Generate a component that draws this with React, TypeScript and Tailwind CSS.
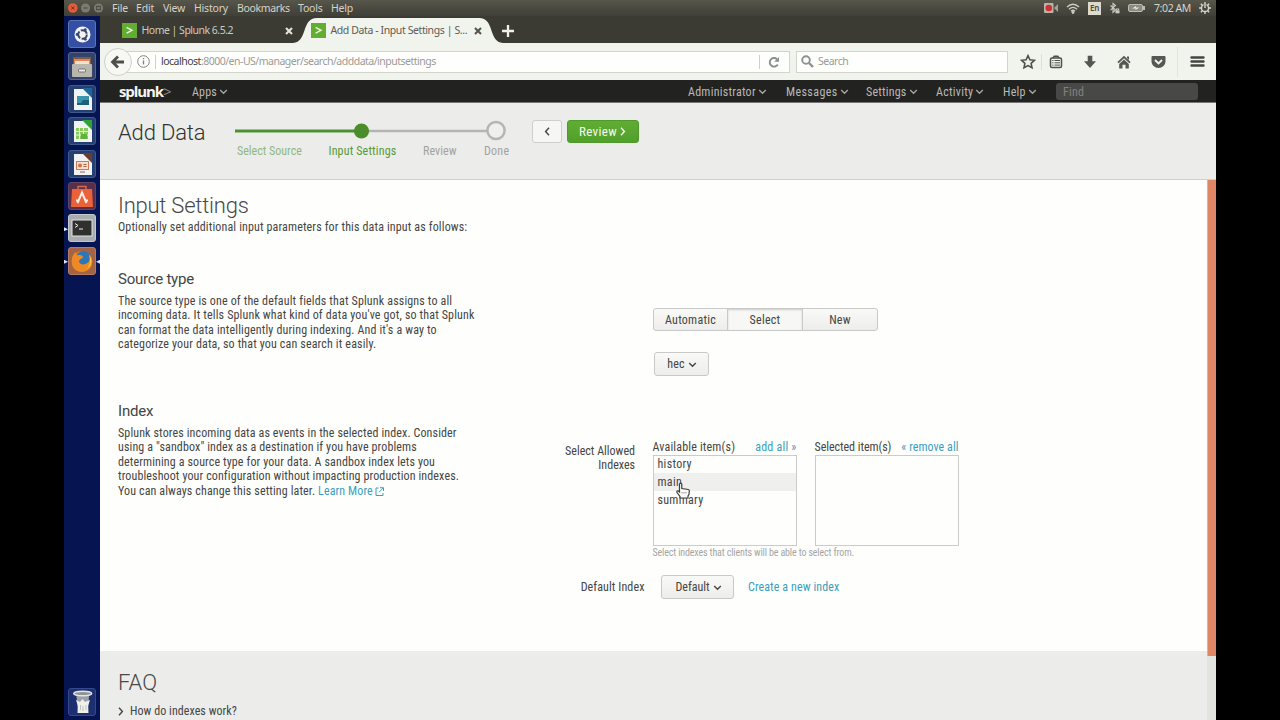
import React from "react";

const cx = (...parts: (string | undefined)[]) => parts.filter(Boolean).join(" ");

function Chevron({ className, dir = "down" }: { className?: string; dir?: "down" | "left" | "right" }) {
  const d = dir === "down" ? "M1.2 3 4.5 6.3 7.8 3" : dir === "left" ? "M6 .8 2.6 4.5 6 8.2" : "M3 .8 6.4 4.5 3 8.2";
  return (
    <svg viewBox="0 0 9 9" className={cx("h-[9px] w-[9px] shrink-0", className)} fill="none" stroke="currentColor" strokeWidth="1.4">
      <path d={d} />
    </svg>
  );
}

function Favicon() {
  return (
    <svg viewBox="0 0 15 15" className="h-[15px] w-[15px] shrink-0">
      <rect width="15" height="15" fill="#62ad32" />
      <path d="M4.6 4.4 10 7.3 4.6 10.2" fill="none" stroke="#e9f7df" strokeWidth="1.4" />
    </svg>
  );
}

function CloseX({ className }: { className?: string }) {
  return (
    <svg viewBox="0 0 8 8" className={cx("h-2 w-2 shrink-0", className)} stroke="currentColor" strokeWidth="2.1">
      <path d="M1 1 7 7M7 1 1 7" />
    </svg>
  );
}

function MenuBar() {
  return (
    <header className="flex h-4 shrink-0 items-center bg-linear-to-b from-[#56564a] to-[#403f39] pl-1 text-[10.5px] text-[#d6d3c8] font-['Noto_Sans',sans-serif]">
      <svg viewBox="0 0 40 12" className="h-3 w-10">
        <circle cx="4.8" cy="6" r="4.8" fill="#e35d3b" />
        <path d="m3.2 4.4 3.2 3.2m0-3.2L3.2 7.6" stroke="#7c2a17" strokeWidth="1" />
        <circle cx="17.5" cy="6" r="4.6" fill="#7d7b70" />
        <path d="M15.500 6h4" stroke="#46453e" />
        <circle cx="30.5" cy="6" r="4.6" fill="#7d7b70" />
        <rect x="28.7" y="4.3" width="3.6" height="3.4" fill="none" stroke="#46453e" />
      </svg>
      <nav className="flex pt-px pl-1 tracking-[-0.2px] whitespace-nowrap">
        <span className="w-6">File</span>
        <span className="w-[27px]">Edit</span>
        <span className="w-[31px]">View</span>
        <span className="w-[43px]">History</span>
        <span className="w-[61px] tracking-[-0.35px]">Bookmarks</span>
        <span className="w-[33px]">Tools</span>
        <span>Help</span>
      </nav>
      <div className="ml-auto flex h-4 items-center pr-[5px]">
        <svg viewBox="0 0 14 10" className="mr-2 h-2.5 w-3.5">
          <rect width="9.5" height="10" rx="1" fill="#b9b3aa" />
          <circle cx="4.8" cy="5" r="3.300" fill="#cf3030" />
          <path d="m10 5 4-4v8z" fill="#a5a199" />
        </svg>
        <svg viewBox="0 0 14 11" className="mr-2 h-[11px] w-3.5" fill="none" stroke="#cfccc1" strokeWidth="1.3">
          <path d="M1 4Q7-1.500 13 4M3 6.200Q7 2.500 11 6.200M5 8.200Q7 6.300 9 8.200" />
          <circle cx="7" cy="9.5" r=".8" fill="#cfccc1" />
        </svg>
        <span className="mr-2 flex h-[13px] w-[13px] items-center justify-center bg-[#dcd9cf] text-[8px] font-semibold tracking-[-0.3px] text-[#4a4940]">En</span>
        <svg viewBox="0 0 11 12" className="mr-2 h-3 w-[11px]" fill="none" stroke="#cfccc1" strokeWidth="1.1">
          <path d="m1.500 3.500 5 4.500-2.500 2.500v-9L6.500 3.500l-5 4.700" />
          <rect x="6.5" y="8.3" width="4" height="3" fill="#cfccc1" stroke="none" />
          <path d="M7.300 8.500V7h2.300v1.500" />
        </svg>
        <svg viewBox="0 0 17 8" className="mr-[9px] h-2 w-[17px]">
          <rect x=".5" y=".5" width="14" height="7" rx="1.5" fill="#8d8b80" stroke="#bdbab0" />
          <rect x="15" y="2" width="2" height="4" fill="#bdbab0" />
          <path d="M4 4.500 8 2v1.500h3.500L7.500 6V4.500z" fill="#e8e5db" />
        </svg>
        <span className="mr-2 w-[37px] pt-px tracking-[-0.4px] whitespace-nowrap">7:02 AM</span>
        <svg viewBox="0 0 12 12" className="h-3 w-3" fill="none" stroke="#d6d3c8">
          <circle cx="6" cy="6" r="3.6" strokeWidth="1.5" />
          <path d="M6 2v3.500" stroke="#4b4a41" strokeWidth="3" />
          <path d="M6 0v6M6 10v2M0 6h2M10 6h2M1.800 1.800l1.500 1.500M8.700 8.700l1.500 1.500M1.800 10.200l1.500-1.500M8.700 3.300l1.500-1.500" strokeWidth="1.4" />
        </svg>
      </div>
    </header>
  );
}

function Tile({ fill, stroke = "#5c73a8", children }: { fill: string; stroke?: string; children: React.ReactNode }) {
  return (
    <svg viewBox="0 0 28 28" className="h-7 w-7 shrink-0">
      <rect x=".5" y=".5" width="27" height="27" rx="2.5" fill={fill} stroke={stroke} />
      {children}
    </svg>
  );
}

function Doc({ corner, children }: { corner: string; children: React.ReactNode }) {
  return (
    <Tile fill="#253f72" stroke="#405a8c">
      <path d="M6 4h10l8 8v13H6z" fill="#f0f3f1" />
      <path d="M14 3h10v10z" fill={corner} />
      {children}
    </Tile>
  );
}

function Launcher() {
  return (
    <aside className="flex w-9 shrink-0 flex-col items-center bg-[#071452] pt-1">
      <div className="flex flex-col gap-[4.4px]">
        <Tile fill="#3450a4" stroke="#5b73b8">
          <circle cx="14.5" cy="14.5" r="8" fill="#f3f4f8" />
          <circle cx="14.5" cy="14.5" r="4.3" fill="none" stroke="#36486f" strokeWidth="2" strokeDasharray="7.5 1.5" />
          <circle cx="9.1" cy="14.5" r="1.4" fill="#36486f" />
          <circle cx="17.3" cy="9.7" r="1.4" fill="#36486f" />
          <circle cx="17.3" cy="19.3" r="1.4" fill="#36486f" />
        </Tile>
        <Tile fill="#34426c" stroke="#56658f">
          <path d="M5 5h18v8H5z" fill="#7b5a49" />
          <path d="M6 7h16v7H6z" fill="#e8834f" />
          <path d="M7 9h14v5H7z" fill="#f4e3d2" />
          <rect x="4" y="12" width="20" height="13" rx="1" fill="#b9b6ad" />
          <rect x="10.500" y="17" width="7" height="3" rx="1" fill="#efeee9" stroke="#75736c" />
        </Tile>
        <Doc corner="#1f6698">
          <rect x="9" y="11" width="12" height="9" fill="#3d94ad" />
          <path d="M9 20v-2h4l2-3h6v5z" fill="#1d6078" />
        </Doc>
        <Doc corner="#2fa436">
          <rect x="8" y="11" width="12" height="11" fill="#86cc5b" />
          <path d="M8 14.500h12M8 18h12M11.500 11v11M15.500 11v11" stroke="#e4f5d8" />
          <rect x="13" y="17" width="6" height="5" fill="#5fb33b" />
        </Doc>
        <Doc corner="#6a3d2c">
          <rect x="8.500" y="11.500" width="12" height="8" fill="#f7ddcb" stroke="#c57b57" />
          <circle cx="12" cy="15.500" r="2" fill="#d2704a" />
          <path d="M15.500 14.500H18.500M15.500 16.500H18.500M12 22h5" stroke="#a3614a" />
        </Doc>
        <Tile fill="#5a2f4c" stroke="#5f4568">
          <path d="M10 8V4.500h8V8" fill="none" stroke="#d66a46" strokeWidth="1.5" />
          <path d="M4 7h20l1 18H3z" fill="#e9623a" />
          <path d="M9.500 21 14 10.500 18.500 21M8 18.500h3M17 18.500h3" fill="none" stroke="#fff0e6" strokeWidth="2" />
        </Tile>
        <div className="relative flex">
          <Tile fill="#a9adb0" stroke="#c4c8cc">
            <rect x="4" y="6" width="20" height="16" fill="#30302f" stroke="#e2e2df" />
            <path d="m7 9.500 3 2-3 2M11 15h4" fill="none" stroke="#eee" />
          </Tile>
          <i className="absolute top-[13px] -left-1 h-1 w-1 bg-[#dfe5f3] [clip-path:polygon(0_0,100%_50%,0_100%)]" />
        </div>
        <div className="relative flex">
          <Tile fill="#a36344" stroke="#b57c60">
            <circle cx="14" cy="14.500" r="10.500" fill="#e57a23" />
            <circle cx="15.500" cy="11.500" r="7.500" fill="#2f76b9" />
            <path d="M4.500 9.500 7 5l2 3.500c3-1 6 0 6 1.500s-4 2-4 4.500 5 4.500 9 1c2-2 2-5 1-8 5 5 4 13-3 16.500-6 2.500-13-.5-14-7.500-.3-3 0-5 .5-7.500z" fill="#ee8a26" />
            <path d="M21 7.500c4 5 3 12-3 15 4-3 5-10 3-15z" fill="#f8c53d" />
          </Tile>
          <i className="absolute top-[13px] -left-1 h-1 w-1 bg-[#dfe5f3] [clip-path:polygon(0_0,100%_50%,0_100%)]" />
          <i className="absolute top-[13px] -right-1 h-1 w-1 bg-[#dfe5f3] [clip-path:polygon(100%_0,0_50%,100%_100%)]" />
        </div>
      </div>
      <div className="mt-auto mb-1 flex">
        <Tile fill="#1d2f70" stroke="#35488a">
          <path d="m8.500 8 1.500 17h10L21 8z" fill="#9aa2a8" />
          <path d="m8 12 4 2 2.500-3 2.500 3 5-2-2 6 .5 7h-11l.5-7z" fill="#eef0ec" />
          <ellipse cx="14.700" cy="5.500" rx="9" ry="2.300" fill="#8d9594" stroke="#e3e6e3" strokeWidth="1.400" />
          <path d="M12.500 17v5M15 18v5M18 17v5" stroke="#bcc2c0" />
        </Tile>
      </div>
    </aside>
  );
}

function Tabs() {
  return (
    <div className="flex h-[27px] shrink-0 items-center bg-[#3b3a33] pl-[21.5px] text-[10.5px] font-['Noto_Sans',sans-serif]">
      <div className="flex h-full w-[171.5px] items-center pt-0.5 text-[#cccac0]">
        <Favicon />
        <span className="ml-[5px] w-[144px] tracking-[-0.5px] whitespace-nowrap">Home | Splunk 6.5.2</span>
        <CloseX className="text-[#e6e4da]" />
      </div>
      <div className="relative flex h-full w-[210px] items-center pt-0.5 text-[#5d5c56]">
        <svg viewBox="0 0 210 27" className="absolute inset-0 h-[27px] w-[210px]">
          <path d="M0 27C15 26 8 2 24 2H186C202 2 195 26 210 27z" fill="#f1f3ed" />
        </svg>
        <div className="relative flex items-center pl-[17.500px]">
          <Favicon />
          <span className="ml-[5px] w-[143px] tracking-[-0.4px] whitespace-nowrap">Add Data - Input Settings | S...</span>
          <CloseX className="text-[#55544e]" />
        </div>
      </div>
      <svg viewBox="0 0 12 12" className="mt-[3px] -ml-[1px] h-3 w-3" stroke="#f1f0ea" strokeWidth="2.3">
        <path d="M6 0v12M0 6h12" />
      </svg>
    </div>
  );
}

function Toolbar() {
  return (
    <div className="flex h-[37px] shrink-0 items-center bg-[#f1f3ed] pl-1 text-[10.5px] text-[#9b9b98] font-['Noto_Sans',sans-serif]">
      <svg viewBox="0 0 28 28" className="relative z-10 -mr-[9px] h-7 w-7 shrink-0">
        <circle cx="14" cy="14" r="13.5" fill="#f7f8f4" stroke="#cfd0c9" />
        <path d="M20 14H9.500M14 8.500 8.500 14l5.500 5.500" fill="none" stroke="#4d4d49" strokeWidth="2.8" />
      </svg>
      <div className="flex h-[22px] w-[667px] items-center border border-[#d3d5cd] bg-[#fefefc] pl-[13px]">
        <svg viewBox="0 0 13 13" className="h-[13px] w-[13px]" fill="none" stroke="#83837e">
          <circle cx="6.5" cy="6.5" r="5.8" />
          <path d="M6.500 5.500v4M6.500 3v1.300" strokeWidth="1.4" />
        </svg>
        <i className="ml-[5px] h-3.5 w-px bg-[#cfd0ca]" />
        <span className="ml-[5px] tracking-[-0.5px] whitespace-nowrap"><span className="text-[#42423e]">localhost</span>:8000/en-US/manager/search/adddata/inputsettings</span>
        <i className="ml-auto h-3.5 w-px bg-[#cfd0ca]" />
        <svg viewBox="0 0 12 12" className="mr-[9px] ml-2 h-3 w-3" fill="none" stroke="#8b8f8e" strokeWidth="1.9">
          <path d="M9 3.200A4.300 4.300 0 1 0 9.800 8.500" />
          <path d="M11 1v4.800H6.200z" fill="#8b8f8e" stroke="none" />
        </svg>
      </div>
      <div className="ml-1.5 flex h-[22px] w-[212px] items-center border border-[#d3d5cd] bg-[#fefefc] pl-1 tracking-[-0.5px]">
        <svg viewBox="0 0 13 13" className="mr-1 h-[13px] w-[13px]" fill="none" stroke="#8d908d" strokeWidth="1.9">
          <circle cx="5" cy="5" r="3.8" />
          <path d="m8 8 4 4" strokeWidth="2.4" />
        </svg>
        Search
      </div>
      <svg viewBox="0 0 16 16" className="ml-3 h-4 w-4" fill="none" stroke="#4f4f4b" strokeWidth="1.6">
        <path d="m8 1.700 1.900 4.100 4.500.5-3.300 3 .9 4.500L8 11.600l-4 2.200.9-4.500-3.300-3 4.500-.5z" />
      </svg>
      <i className="ml-[5px] h-4 w-px bg-[#dddfd8]" />
      <svg viewBox="0 0 14 14" className="ml-[7px] h-3.5 w-3.5" fill="none" stroke="#4f4f4b" strokeWidth="1.5">
        <rect x="1.5" y="3" width="11" height="9.5" rx="1.5" />
        <path d="M4 3 5.200 1.300h3.600L10 3" />
        <path d="M3.200 5.500h1.300M5.500 5.500h5.500M3.200 7.800h1.300M5.500 7.800h5.500M3.200 10.100h1.300M5.500 10.100h5.500" strokeWidth="1" />
      </svg>
      <svg viewBox="0 0 14 14" className="ml-5 h-3.5 w-3.5" fill="#565652">
        <path d="M4.700.8h4.600v5.500H13L7 13 1 6.300h3.700z" />
      </svg>
      <svg viewBox="0 0 14 14" className="ml-5 h-3.5 w-3.5" fill="#565652">
        <path d="m7 .8 6.600 6.200-1.200 1.300L7 3.300 1.600 8.300.4 7zM7 4.500 11.800 8.900V13.500H8.500V9.800h-3v3.700H2.200V8.900zM10 1.500h2V5l-2-2z" />
      </svg>
      <svg viewBox="0 0 15 14" className="ml-5 h-3.5 w-[15px]">
        <path d="M1.500 1h12q1 0 1 1v4.500a7 6.500 0 0 1-14 0V2q0-1 1-1z" fill="#565652" />
        <path d="m4 5 3.500 3.400L11 5" fill="none" stroke="#f1f3ed" strokeWidth="1.9" />
      </svg>
      <i className="ml-[11px] h-[30px] w-px bg-[#e2e4de]" />
      <svg viewBox="0 0 15 12" className="ml-3 h-3 w-[15px]" stroke="#454541" strokeWidth="2.4" strokeLinecap="round">
        <path d="M1.500 1.500h12M1.500 5.500h12M1.500 9.500h12" />
      </svg>
    </div>
  );
}

function NavItem({ label, className }: { label: string; className?: string }) {
  return (
    <span className={cx("flex shrink-0 items-center gap-[2px] whitespace-nowrap", className)}>
      {label}
      <Chevron className="text-[#a5a5a2]" />
    </span>
  );
}

function SplunkBar() {
  return (
    <div className="flex h-[23px] shrink-0 items-center border-b border-[#777] bg-[#222221] pt-px pl-[19px] text-[#b9b9b6]">
      <span className="w-[73px] pb-px text-[15px] font-bold tracking-[-1.1px] text-[#f5f5f3] font-['Open_Sans',sans-serif] [font-stretch:100%]">splunk<span className="font-normal text-[#8b8b88]">&gt;</span></span>
      <NavItem label="Apps" className="w-[496px] tracking-[0.2px]" />
      <NavItem label="Administrator" className="w-[98px] tracking-[0.25px]" />
      <NavItem label="Messages" className="w-20 tracking-[0.4px]" />
      <NavItem label="Settings" className="w-[70px] tracking-[0.2px]" />
      <NavItem label="Activity" className="w-[67px] tracking-[0.25px]" />
      <NavItem label="Help" className="w-[53px] tracking-[0.2px]" />
      <span className="flex h-[17px] w-[142px] items-center rounded-[3px] bg-[#484846] pl-[7px] tracking-[0.2px] text-[#81817e]">Find</span>
    </div>
  );
}

function WizardHeader() {
  return (
    <div className="flex h-[77px] shrink-0 items-start border-b border-[#cfcfcd] bg-[#ececea] pl-[18px]">
      <h1 className="mt-[15px] w-[113px] text-[22px] leading-[30px] font-light tracking-[-0.15px] text-[#333] [font-stretch:100%]">Add Data</h1>
      <div className="mt-[17px] w-[301px]">
        <svg viewBox="0 0 282 22" className="h-[22px] w-[282px]">
          <path d="M131 11H256" stroke="#b5b5b3" strokeWidth="2.4" />
          <path d="M4 11H131" stroke="#4f9130" strokeWidth="3" />
          <circle cx="130.5" cy="11" r="7.6" fill="#4a8d2a" />
          <circle cx="265" cy="10.5" r="8.6" fill="#efefed" stroke="#b5b5b3" strokeWidth="2.5" />
        </svg>
        <div className="mt-0.5 flex pl-1.5 leading-[14px] whitespace-nowrap text-[#a3a3a1]">
          <span className="w-[91.5px] text-[#91b77f]">Select Source</span>
          <span className="w-[94.5px] tracking-[0.15px] text-[#559a38]">Input Settings</span>
          <span className="w-[61px] tracking-[0.05px]">Review</span>
          <span className="tracking-[0.25px]">Done</span>
        </div>
      </div>
      <span className="mt-[17px] flex h-[23px] w-[30px] items-center justify-center rounded-[3px] border border-[#cfcfcd] bg-[#f6f6f4] text-[#444]">
        <Chevron dir="left" />
      </span>
      <span className="mt-[17px] ml-[5px] flex h-[23px] w-[72px] items-center justify-center gap-px rounded-[3px] border border-[#4f9a2b] bg-linear-to-b from-[#61ad33] to-[#519f2c] text-[13px] tracking-[0.3px] text-[#f3faef]">
        Review <Chevron dir="right" />
      </span>
    </div>
  );
}

const button = "flex items-center justify-center border border-[#c9c9c7] bg-linear-to-b from-[#f9f9f7] to-[#ededeb]";

function ListBox({ title, action, children }: { title: React.ReactNode; action: React.ReactNode; children?: React.ReactNode }) {
  return (
    <div className="w-36">
      <div className="flex h-[15px] items-center justify-between pt-px whitespace-nowrap">
        {title}
        {action}
      </div>
      <div className="mt-px h-[91px] border border-[#cbcbc9] leading-[18px] tracking-[0.3px]">{children}</div>
    </div>
  );
}

function Pointer() {
  return (
    <svg viewBox="0 0 16 17" className="absolute top-[27px] left-[22px] h-[17px] w-4">
      <path d="M4.500 10V2q1.200-1.600 2.300 0v4.500l6.500 1q1.200.3 1 1.500l-.3 3.500-1 1.500v2H5v-1.500L2 10.500Q1.500 8.500 3 8.800z" fill="#fbfbfa" stroke="#3c3c3b" strokeWidth="1.2" />
      <path d="M6.500 10.800h6" stroke="#666" strokeDasharray="1 1" />
    </svg>
  );
}

function Settings() {
  return (
    <div className="h-[471px] shrink-0 pt-3 pl-[18px]">
      <h2 className="text-[22px] leading-7 font-light tracking-[-0.22px] text-[#484848] [font-stretch:100%]">Input Settings</h2>
      <p className="h-4 leading-[15px] tracking-[0.14px]">Optionally set additional input parameters for this data input as follows:</p>

      <section className="mt-[33px] flex h-[132px]">
        <div className="w-[535px]">
          <h3 className="text-[15px] leading-5 tracking-[-0.25px] [font-stretch:100%]">Source type</h3>
          <p className="mt-[5px] leading-[14.4px] tracking-[0.15px] whitespace-nowrap">
            The source type is one of the default fields that Splunk assigns to all<br />
            incoming data. It tells Splunk what kind of data you've got, so that Splunk<br />
            can format the data intelligently during indexing. And it's a way to<br />
            categorize your data, so that you can search it easily.
          </p>
        </div>
        <div className="pt-[39px]">
          <div className="flex h-[23px] tracking-[0.25px]">
            <span className={cx(button, "w-[75px] rounded-l-[3px]")}>Automatic</span>
            <span className="-ml-px flex w-[76px] items-center justify-center border border-[#c9c9c7] bg-[#f7f7f5] shadow-[inset_0_1px_2px_#ccc]">Select</span>
            <span className={cx(button, "-ml-px w-[76px] rounded-r-[3px]")}>New</span>
          </div>
          <span className={cx(button, "mt-[21px] ml-[0.5px] h-6 w-[55px] gap-[3px] rounded-[3px] pl-0.5 tracking-[0.2px]")}>hec <Chevron /></span>
        </div>
      </section>

      <section className="flex">
        <div className="w-[380px] shrink-0">
          <h3 className="text-[15px] leading-5 tracking-[-0.2px] [font-stretch:100%]">Index</h3>
          <p className="mt-[5px] leading-[14.4px] tracking-[0.12px] whitespace-nowrap">
            Splunk stores incoming data as events in the selected index. Consider<br />
            using a "sandbox" index as a destination if you have problems<br />
            determining a source type for your data. A sandbox index lets you<br />
            troubleshoot your configuration without impacting production indexes.<br />
            You can always change this setting later. <span className="text-[#3ba0bd]">Learn More
              <svg viewBox="0 0 9 9" className="ml-[2px] inline h-[9px] w-[9px] align-[-1px]" fill="none" stroke="currentColor">
                <path d="M3.500 1H1v7.500h7V6M5 .7h3.500V4M8.300.9 4 5.200" />
              </svg></span>
          </p>
        </div>
        <div className="pt-[38px]">
          <div className="flex">
            <div className="mt-[5px] w-[137px] text-right leading-[14.4px]">Select Allowed<br />Indexes</div>
            <div className="relative ml-[17.5px] flex gap-[18px]">
              <ListBox title={<span className="tracking-[0.17px]">Available item(s)</span>} action={<span className="tracking-[0.2px] text-[#3ba0bd]">add all »</span>} />
              <ListBox title={<span className="tracking-[-0.05px]">Selected item(s)</span>} action={<span className="tracking-[0.05px] text-[#3ba0bd]">« remove all</span>} />
              <div className="absolute top-[16px] left-0 w-36 px-px leading-[18px] tracking-[0.3px]">
                <div className="pl-1">history</div>
                <div className="bg-[#efefed] pl-1">main</div>
                <div className="pl-1">summary</div>
                <Pointer />
              </div>
            </div>
          </div>
          <p className="pl-[154.5px] text-[10px] leading-[14px] tracking-[-0.15px] text-[#a5a5a3]">Select indexes that clients will be able to select from.</p>
          <div className="mt-[15px] flex h-6 items-center">
            <span className="w-[146.5px] text-right tracking-[0.1px]">Default Index</span>
            <span className={cx(button, "ml-[16.5px] h-6 w-[73px] gap-[3px] rounded-[3px] pl-0.5")}>Default <Chevron /></span>
            <span className="ml-3.5 tracking-[0.1px] text-[#3ba0bd]">Create a new index</span>
          </div>
        </div>
      </section>
    </div>
  );
}

export default function App() {
  return (
    <div className="h-[720px] w-[1280px] overflow-hidden bg-black px-16 text-[12px] text-[#454543] font-['Roboto',sans-serif] [font-stretch:75%]">
      <div className="flex h-full flex-col">
        <MenuBar />
        <div className="flex min-h-0 flex-1">
          <Launcher />
          <main className="flex min-w-0 flex-1 flex-col">
            <Tabs />
            <Toolbar />
            <SplunkBar />
            <WizardHeader />
            <div className="flex min-h-0 flex-1 bg-[#fefefd]">
              <div className="flex min-w-0 flex-1 flex-col">
                <Settings />
                <div className="flex-1 bg-[#ececeb] pt-[17px] pl-[18px]">
                  <h2 className="text-[22px] leading-[30px] font-light text-[#484848] [font-stretch:100%]">FAQ</h2>
                  <p className="mt-[5px] flex items-center gap-[5px] leading-4 tracking-[0.05px]">
                    <Chevron dir="right" className="-ml-0.5" /> How do indexes work?
                  </p>
                </div>
              </div>
              <div className="w-[9px] shrink-0 bg-[#e2e4df]">
                <div className="h-[476px] border-l border-[#e7b08f] bg-[#df8666]" />
              </div>
            </div>
          </main>
        </div>
      </div>
    </div>
  );
}
